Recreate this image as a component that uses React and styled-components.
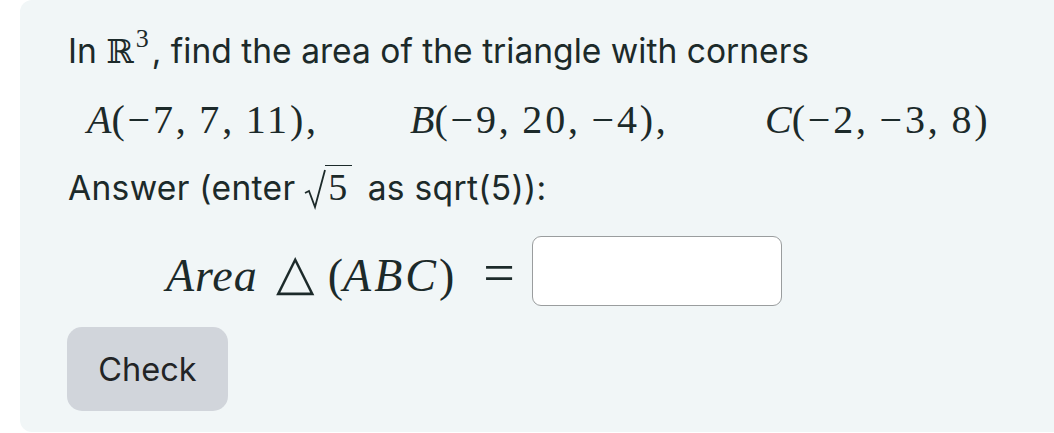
import React from "react";
import styled, { createGlobalStyle } from "styled-components";

const Global = createGlobalStyle`
  html, body { margin: 0; padding: 0; background: #ffffff; overflow: hidden; }
  body { font-family: Inter, "Noto Sans", sans-serif; }
`;

const Page = styled.div`
  width: 1054px;
  height: 433px;
  overflow: hidden;
`;

const Card = styled.section`
  margin-left: 20px;
  width: 1060px;
  height: 432px;
  box-sizing: border-box;
  background: #f1f6f7;
  border-radius: 12px;
  padding: 31px 0 0 48px;
  display: flex;
  flex-direction: column;
  color: #1c2a2a;
`;

const Text = styled.p`
  margin: ${(p) => p.$mt || 0}px 0 0 0;
  height: 40px;
  font-family: Inter, "Noto Sans", sans-serif;
  font-size: 33.6px;
  line-height: 40px;
  letter-spacing: ${(p) => p.$ls || 0}px;
  white-space: nowrap;
`;

const Reals = styled.span`
  font-family: "DejaVu Serif", serif;
  font-size: 33px;
  font-weight: 300;
`;

const Sup = styled.sup`
  font-family: "Liberation Serif", serif;
  font-size: 26px;
  line-height: 0;
  vertical-align: 0;
  position: relative;
  top: -16px;
  margin-left: 2px;
  margin-right: 3px;
`;

const Var = styled.i`
  font-style: italic;
  letter-spacing: ${(p) => p.$ls || 0}px;
`;

const PointsRow = styled.div`
  margin-top: 27px;
  height: 44px;
  padding-left: 19px;
  display: grid;
  grid-template-columns: 323px 355px auto;
  font-family: "Liberation Serif", "DejaVu Serif", serif;
  font-size: 40px;
  line-height: 44px;
  letter-spacing: 2.8px;
  white-space: nowrap;
`;

const RootSign = styled.svg`
  width: 21px;
  height: 40px;
  vertical-align: -9px;
  margin-left: 9px;
  overflow: visible;
`;

const Radicand = styled.span`
  font-family: "Liberation Serif", serif;
  font-size: 38px;
  border-top: 1.8px solid #1c2a2a;
  padding: 0 4px 0 3px;
  margin-right: 16px;
`;

const AreaRow = styled.div`
  margin-top: 29px;
  padding-left: 98px;
  display: flex;
  align-items: center;
  height: 70px;
`;

const AreaLabel = styled.span`
  font-family: "Liberation Serif", "DejaVu Serif", serif;
  font-size: 46px;
  line-height: 50px;
  white-space: nowrap;
  margin-top: 6px;
`;

const Tri = styled.span`
  font-family: "DejaVu Sans", sans-serif;
  font-size: 50px;
  font-weight: 200;
  margin: 0 14px 0 18px;
  vertical-align: 2px;
`;

const Equals = styled.span`
  font-family: "Liberation Serif", serif;
  font-size: 56px;
  line-height: 50px;
  margin: 4px 17px 0 29px;
`;

const AnswerBox = styled.input`
  width: 250px;
  height: 70px;
  box-sizing: border-box;
  border: 1.5px solid #9a9d9e;
  border-radius: 9px;
  background: #ffffff;
  outline: none;
  font-size: 28px;
`;

const CheckButton = styled.button`
  margin: 21px 0 0 -1px;
  width: 161px;
  height: 84px;
  border: none;
  border-radius: 15px;
  background: #d1d5db;
  color: #222426;
  font-family: Inter, "Noto Sans", sans-serif;
  font-size: 32.5px;
  padding: 0;
  cursor: pointer;
  align-self: flex-start;
`;

const Minus = "\u2212";
const Thin = "\u2009";

export default function App() {
  return (
    <Page>
      <Global />
      <Card>
        <Text>
          In <Reals>ℝ</Reals>
          <Sup>3</Sup>, find the area of the triangle with corners
        </Text>
        <PointsRow>
          <span>
            <Var>A</Var>({Minus}7,{Thin}7,{Thin}11),
          </span>
          <span>
            <Var>B</Var>({Minus}9,{Thin}20,{Thin}{Minus}4),
          </span>
          <span>
            <Var>C</Var>({Minus}2,{Thin}{Minus}3,{Thin}8)
          </span>
        </PointsRow>
        <Text $mt={25} $ls={0.3}>
          Answer (enter
          <RootSign viewBox="0 0 21 40" aria-hidden="true">
            <path
              d="M1 24 L5 22 L11 38 L21 0.9"
              fill="none"
              stroke="#1c2a2a"
              strokeWidth="1.8"
              strokeLinejoin="miter"
            />
          </RootSign>
          <Radicand>5</Radicand>
          as sqrt(5)):
        </Text>
        <AreaRow>
          <AreaLabel>
            <Var $ls={1}>Area</Var>
            <Tri>△</Tri>
            (<Var $ls={3}>ABC</Var>)
          </AreaLabel>
          <Equals>=</Equals>
          <AnswerBox type="text" aria-label="Area of triangle ABC" />
        </AreaRow>
        <CheckButton type="button">Check</CheckButton>
      </Card>
    </Page>
  );
}
